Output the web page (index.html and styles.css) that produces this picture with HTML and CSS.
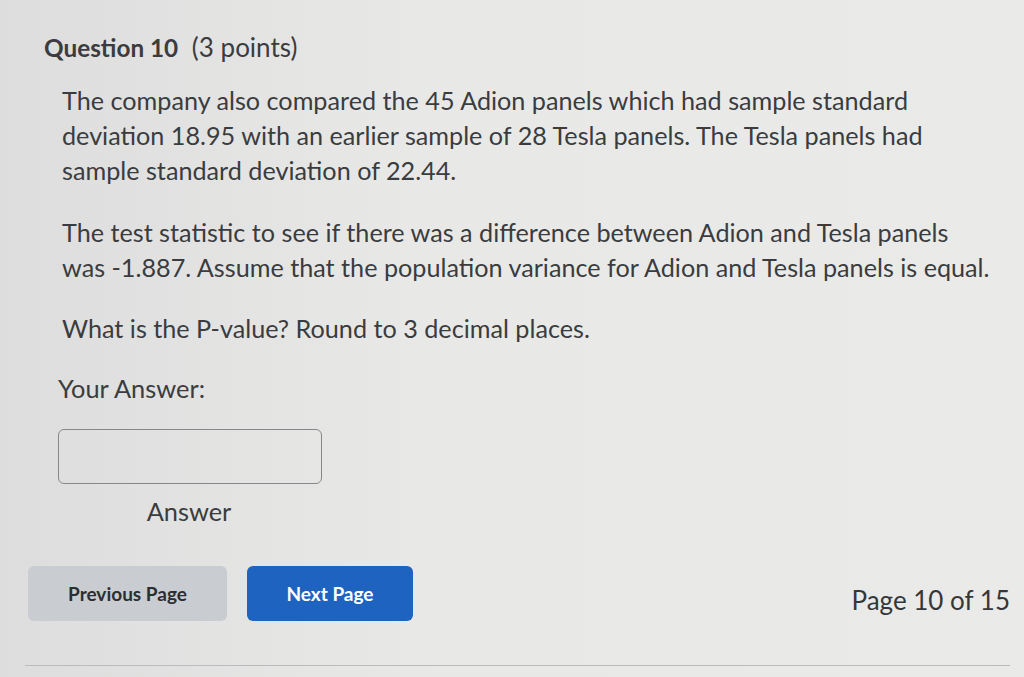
FILE: index.html
```html
<!DOCTYPE html>
<html lang="en">
<head>
 <meta charset="UTF-8">
 <meta name="viewport" content="width=device-width, initial-scale=1.0">
 <title>Question 10</title>
 <link rel="stylesheet" href="styles.css">
</head>
<body>
<div class="quiz-page">
 <h2 class="question-title"><strong>Question 10</strong> (3 points)</h2>
 <div class="question-body">
   <p>The company also compared the 45 Adion panels which had sample standard deviation 18.95 with an earlier sample of 28 Tesla panels. The Tesla panels had sample standard deviation of 22.44.</p>
   <p>The test statistic to see if there was a difference between Adion and Tesla panels was -1.887. Assume that the population variance for Adion and Tesla panels is equal.</p>
   <p>What is the P-value? Round to 3 decimal places.</p>
   <div class="answer-block">
     <label for="answer" class="answer-heading">Your Answer:</label>
     <input type="text" id="answer" class="answer-input">
     <div class="answer-label">Answer</div>
   </div>
 </div>
 <div class="page-nav">
   <button class="btn btn-prev">Previous Page</button>
   <button class="btn btn-next">Next Page</button>
   <span class="page-count">Page 10 of 15</span>
 </div>
 <hr class="page-rule">
</div>
</body>
</html>
```

FILE: styles.css
```css
body {
  font-family: Lato, "Open Sans", sans-serif;
  background: linear-gradient(to right, #dcdddc, #e8e9e7 40%, #eaebe9);
  color: #3a3c3f;
  margin: 0;
  padding: 0;
  height: 677px;
  overflow: hidden;
}
.quiz-page {
  padding: 31px 14px 0 28px;
}
.question-title {
  font-size: 26px;
  font-weight: normal;
  margin: 0 0 0 16px;
  line-height: 32px;
}
.question-title strong {
  font-size: 24.3px;
  font-weight: bold;
  margin-right: 7px;
}
.question-body {
  padding-left: 34px;
  padding-top: 19px;
}
.question-body p {
  max-width: 929px;
  font-size: 25.2px;
  line-height: 34.8px;
  margin: 0 0 26px 0;
}
.question-body p:first-child {
  margin-bottom: 28px;
}
.answer-heading {
  display: block;
  font-size: 25.4px;
  line-height: 32px;
  margin-left: -4px;
}
.answer-input {
  display: block;
  box-sizing: border-box;
  width: 264px;
  height: 55px;
  margin: 25px 0 0 -4px;
  border: 1.5px solid #85888b;
  border-radius: 6px;
  background: transparent;
}
.answer-label {
  width: 254px;
  text-align: center;
  font-size: 25.4px;
  line-height: 32px;
  margin-top: 11px;
}
.page-nav {
  display: flex;
  align-items: center;
  margin-top: 39px;
}
.btn {
  height: 55px;
  border: none;
  border-radius: 6px;
  font-family: Lato, sans-serif;
  font-size: 19px;
  font-weight: bold;
  cursor: pointer;
}
.btn-prev {
  width: 199px;
  background-color: #c9ccd0;
  color: #2b2e32;
}
.btn-next {
  width: 166px;
  margin-left: 20px;
  background-color: #1f63c0;
  color: #ffffff;
}
.page-count {
  margin-left: auto;
  font-size: 26px;
  padding-top: 14px;
  color: #35373a;
}
.page-rule {
  margin: 44px 0 0 -3px;
  border: none;
  border-top: 1.5px solid #b9bbbc;
}
```
